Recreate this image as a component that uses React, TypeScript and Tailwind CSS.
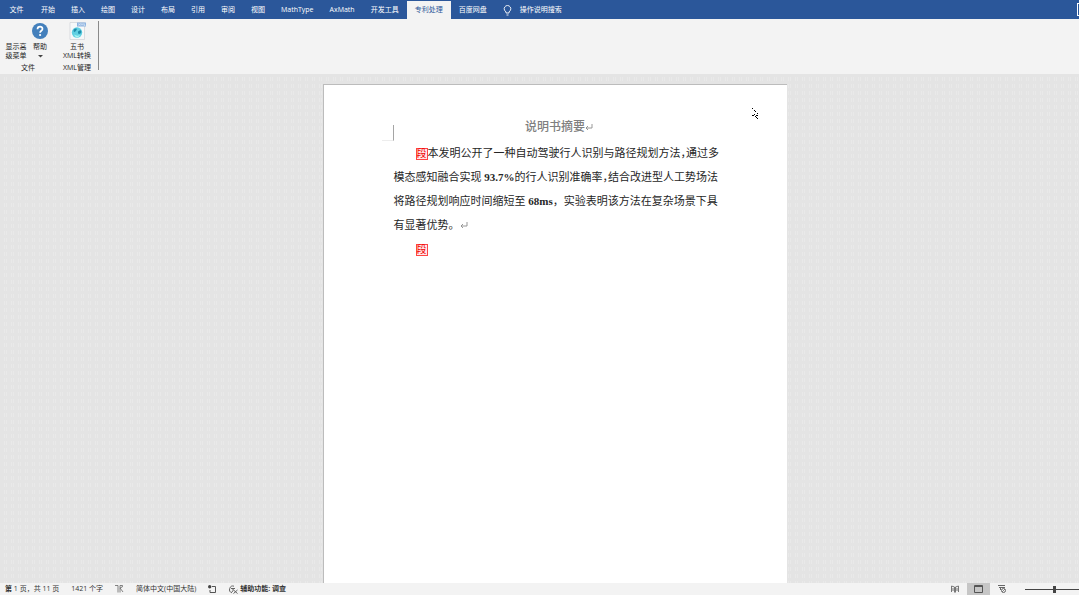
type Tab = { label: string; active?: boolean };

const tabs: Tab[] = [
  { label: '开始' },
  { label: '插入' },
  { label: '绘图' },
  { label: '设计' },
  { label: '布局' },
  { label: '引用' },
  { label: '审阅' },
  { label: '视图' },
  { label: 'MathType' },
  { label: 'AxMath' },
  { label: '开发工具' },
  { label: '专利处理', active: true },
  { label: '百度网盘' },
];

function TabBar() {
  return (
    <header className="flex h-[19px] shrink-0 items-stretch justify-between bg-[#2b579a] text-white">
      <nav className="flex items-stretch pt-px">
        <button className="w-[33px] text-center">文件</button>
        {tabs.map((tab) => (
          <button
            key={tab.label}
            className={tab.active ? 'bg-[#f3f3f3] px-2 whitespace-nowrap text-[#2b579a]' : 'px-2 whitespace-nowrap'}
          >
            {tab.label}
          </button>
        ))}
        <button className="ml-2 flex items-center gap-2 whitespace-nowrap">
          <svg className="h-[11px] w-[9px]" viewBox="0 0 9 11" fill="none" stroke="white">
            <path d="M3 8V7L1.5 5.2A3.3 3.3 0 1 1 7.5 5.2L6 7v1zM3.5 10h2" strokeWidth="0.9" />
          </svg>
          操作说明搜索
        </button>
      </nav>
      <button aria-label="功能区显示选项" className="my-[3px] w-0.5 border-y border-l border-white" />
    </header>
  );
}

function HelpIcon() {
  return (
    <svg className="size-4" viewBox="0 0 16 16" fill="none">
      <circle cx="8" cy="8" r="8" fill="#4480bc" />
      <path d="M5.5 6.200C5.500 2.800 10.700 2.900 10.500 6c-.1 1.800-2.400 1.800-2.400 3.700" stroke="white" strokeWidth="1.700" />
      <circle cx="8.100" cy="12" r="1.100" fill="white" />
    </svg>
  );
}

function XmlIcon() {
  return (
    <svg className="h-[18px] w-[17px]" viewBox="0 0 17 18">
      <path d="M1 .5h14.500v17H1z" fill="#f6f8f9" stroke="#cfd3d7" strokeWidth="0.7" />
      <rect x="8" y="0.5" width="9" height="4" fill="#8db3e0" />
      <path d="M9.500 1.500l1.500 2m0-2l-1.500 2M12 3.500v-2l1 1 1-1v2M15.300 1.500v2h1" fill="none" stroke="#f0f6fd" strokeWidth="0.6" />
      <circle cx="8" cy="10.500" r="5.200" fill="#5fd0e2" />
      <path d="M4.500 8q1.500-2 3.500-1.200L7 9l-2 1.200zM9 9.500l2.500-1.500 1 2-1.500 2-2-.5z" fill="#1f8cab" />
      <path d="M5 12.500q3 2 6 .5-1 2.500-3.300 2.300Q6 15 5 12.500z" fill="#a9f5f2" />
    </svg>
  );
}

function Ribbon() {
  return (
    <section className="flex h-[55px] shrink-0 bg-[#f3f3f3] pt-0.5 text-[#262626]">
      <div className="flex w-14 flex-col justify-between pb-0.5">
        <div className="flex">
          <button className="w-8 pt-[21px] text-center leading-[9px]">
            显示高
            <br />
            级菜单
          </button>
          <button className="flex w-4 flex-col items-center pt-0.5 leading-[9px] whitespace-nowrap">
            <HelpIcon />
            <span className="pt-[3px]">帮助</span>
            <svg className="mt-1 h-[3px] w-[5px]" viewBox="0 0 5 3">
              <path d="M0 0h5L2.500 2.500z" fill="#444" />
            </svg>
          </button>
        </div>
        <div className="text-center leading-[9px]">文件</div>
      </div>
      <div className="mb-1 flex w-[43px] flex-col items-center justify-between border-r border-[#8a8a8a]">
        <button className="flex flex-col items-center pt-px leading-[9px]">
          <XmlIcon />
          <span className="pt-0.5">
            五书
            <br />
            XML转换
          </span>
        </button>
        <div className="-mb-0.5 leading-[9px]">XML管理</div>
      </div>
    </section>
  );
}

function ReturnMark() {
  return (
    <svg className="inline-block h-[7px] w-[8px] align-baseline" viewBox="0 0 8 7" fill="none" stroke="#8c8c8c">
      <path d="M7 0v4H1M3 2L1 4l2 2" strokeWidth="0.9" />
    </svg>
  );
}

function ParagraphTag() {
  return (
    <span className="inline-block h-3 w-3 border border-[#f44] bg-[#ffe8e8] text-center align-middle text-[10px] leading-[10px] text-[#f00000]">
      段
    </span>
  );
}

function Comma() {
  return <span className="[font-feature-settings:'halt']">，</span>;
}

function DocumentPage() {
  return (
    <article className="relative mx-auto w-[464px] border-t border-l border-[#bcbcbc] bg-white px-[70px] pt-[34px] font-['Liberation_Serif','Noto_Sans_CJK_SC',serif] text-[11px] text-[#262626]">
      <div className="absolute top-10 left-[58px] h-4 w-3 border-r border-b border-r-[#a5a5a5] border-b-[#ededed]" />
      <h1 className="pl-2 text-center text-[12px] leading-4 font-medium text-[#808080]">
        说明书摘要
        <ReturnMark />
      </h1>
      <p className="pt-1.5 leading-6 whitespace-nowrap">
        <span className="pl-[22px]">
          <ParagraphTag />
        </span>
        本发明公开了一种自动驾驶行人识别与路径规划方法
        <Comma />
        通过多
        <br />
        模态感知融合实现 <span className="font-semibold">93.7%</span>的行人识别准确率
        <Comma />
        结合改进型人工势场法
        <br />
        将路径规划响应时间缩短至 <span className="font-semibold">68ms</span>，实验表明该方法在复杂场景下具
        <br />
        有显著优势。
        <ReturnMark />
      </p>
      <p className="pl-[22px] leading-6">
        <ParagraphTag />
      </p>
      <svg className="absolute top-[22px] right-7 h-[13px] w-[8px]" viewBox="0 0 8 13">
        <path d="M1 1h1v1H1zM3 3h1v1H3zM4 4h1v1H4zM6 6h1v1H6zM1 8h2v1H1zM3 7h1v1H3zM5 8h2v1H5zM4 9h1v1H4zM5 10h1v1H5zM6 11h1v1H6z" fill="black" />
      </svg>
    </article>
  );
}

function StatusBar() {
  return (
    <footer className="flex h-3 shrink-0 items-center justify-between bg-[#f3f3f3] text-[#333]">
      <div className="flex items-center gap-3 pl-[5px] whitespace-nowrap">
        <span>
          <span className="font-bold">第</span> 1 页，共 11 页
        </span>
        <span>1421 个字</span>
        <svg className="h-2 w-[9px]" viewBox="0 0 9 8" fill="none" stroke="#666" strokeWidth="0.8">
          <path d="M0 .5h3v7M5 7.500V.5h2.500q1 1.500-2.500 2.500l3 4" />
        </svg>
        <span>简体中文(中国大陆)</span>
        <svg className="h-2 w-2" viewBox="0 0 8 8" fill="none" stroke="#555">
          <path d="M4 1.500h3.500v6H2V5" />
          <circle cx="1.700" cy="1.700" r="1.700" fill="#444" stroke="none" />
        </svg>
        <span className="flex items-center gap-0.5 font-bold">
          <svg className="h-[9px] w-[10px]" viewBox="0 0 10 9" fill="none" stroke="#555" strokeWidth="0.9">
            <path d="M6 1.200A3.300 3.300 0 1 0 4 7.800M3 3.500h4M5 3.500v2L4 7M5.500 5l4 3.500M9.500 5l-4 3.500" />
          </svg>
          辅助功能: 调查
        </span>
      </div>
      <div className="flex h-full items-stretch">
        <button aria-label="阅读视图" className="flex w-6 items-center justify-center">
          <svg className="h-2 w-2" viewBox="0 0 8 8" fill="none" stroke="#777">
            <path d="M.5 7V1l3 1v5.500M4.500 7.500V2l3-1v6M2 3v3M6 3v3" />
          </svg>
        </button>
        <button aria-label="页面视图" className="flex w-[23px] items-center justify-center bg-[#c6c6c6]">
          <svg className="h-2 w-[9px]" viewBox="0 0 9 8" fill="none" stroke="#555">
            <path d="M.5 .5h8v7h-8zM.5 1.500h8" />
          </svg>
        </button>
        <button aria-label="Web 版式视图" className="flex w-6 items-center justify-center">
          <svg className="h-2 w-2" viewBox="0 0 8 8" fill="none" stroke="#666">
            <path d="M0 .5h7M1 2.500h6M2.500 3v2" />
            <circle cx="5.500" cy="5.500" r="2" />
            <path d="M4 7l3-3" strokeWidth="0.8" />
          </svg>
        </button>
        <input
          type="range"
          aria-label="缩放"
          defaultValue={54}
          className="ml-[11px] w-[54px] appearance-none bg-[linear-gradient(#444,#444)] bg-[length:100%_1px] bg-center bg-no-repeat [&::-webkit-slider-thumb]:h-[7px] [&::-webkit-slider-thumb]:w-[3px] [&::-webkit-slider-thumb]:appearance-none [&::-webkit-slider-thumb]:bg-[#444]"
        />
      </div>
    </footer>
  );
}

export default function App() {
  return (
    <div className="flex min-h-screen flex-col overflow-hidden font-['Open_Sans','Noto_Sans_CJK_SC',sans-serif] text-[7px]">
      <TabBar />
      <Ribbon />
      <main className="flex flex-1 bg-[#e4e4e4] bg-[linear-gradient(#e4e4e4_3px,transparent_3px),linear-gradient(90deg,#e4e4e4_4px,#e9e9e9_4px,#e9e9e9_5px,#e4e4e4_5px,#e4e4e4_6px,#e9e9e9_6px)] bg-[length:7px_7px] pt-2.5 pl-[30px]">
        <DocumentPage />
      </main>
      <StatusBar />
    </div>
  );
}
